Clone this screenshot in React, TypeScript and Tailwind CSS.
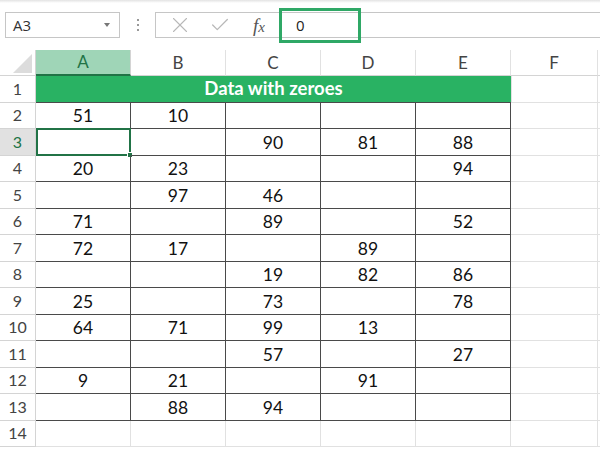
import { X, Check } from "lucide-react";

const cols = ["A", "B", "C", "D", "E", "F"];

// rows 2..13, columns A..E ("" = blank)
const data: string[][] = [
  ["51", "10", "", "", ""],
  ["", "", "90", "81", "88"],
  ["20", "23", "", "", "94"],
  ["", "97", "46", "", ""],
  ["71", "", "89", "", "52"],
  ["72", "17", "", "89", ""],
  ["", "", "19", "82", "86"],
  ["25", "", "73", "", "78"],
  ["64", "71", "99", "13", ""],
  ["", "", "57", "", "27"],
  ["9", "21", "", "91", ""],
  ["", "88", "94", "", ""],
];

function RowHeader({ n, active }: { n: number; active?: boolean }) {
  return (
    <div
      className={`h-[26.5px] flex items-center justify-center border-r border-b border-[#d4d4d4] text-[16px] ${
        active ? "bg-[#e1e1e1] text-[#217346]" : "bg-white text-[#444]"
      }`}
    >
      {n}
    </div>
  );
}

function FormulaBar() {
  return (
    <div className="h-[47px] flex items-start pt-[9px] pl-[5px]">
      {/* Name box */}
      <div className="w-[115px] h-[26px] border border-[#c6c6c6] flex items-center justify-between pl-[7px] pr-[9px] text-[15px] text-[#333] font-['Open_Sans',sans-serif]">
        <span>A3</span>
        <span className="w-0 h-0 border-l-[3.5px] border-r-[3.5px] border-t-[4px] border-l-transparent border-r-transparent border-t-[#777]" />
      </div>
      {/* Dots */}
      <div className="w-[35px] flex flex-col items-center gap-[3px] pt-[7px]">
        <span className="w-[2px] h-[2px] bg-[#999]" />
        <span className="w-[2px] h-[2px] bg-[#999]" />
        <span className="w-[2px] h-[2px] bg-[#999]" />
      </div>
      {/* Formula input */}
      <div className="relative flex-1 h-[26px] border border-[#c6c6c6] border-r-0 flex items-center">
        <div className="w-[45px] flex justify-center pl-[2px]">
          <X size={26} strokeWidth={1} color="#b8b8b8" />
        </div>
        <div className="w-[38px] flex justify-center">
          <Check size={22} strokeWidth={1.4} color="#b8b8b8" />
        </div>
        <div className="w-[40px] flex justify-center text-[19px] italic text-[#555] font-['Liberation_Serif',serif] leading-none">
          f<span className="text-[15px] self-end">x</span>
        </div>
        <div className="absolute left-[123px] top-[-5px] w-[82px] h-[35px] border-[3px] border-[#2fa866] flex items-center pl-[14px] text-[15px] text-[#222] font-['Open_Sans',sans-serif]">
          0
        </div>
      </div>
    </div>
  );
}

export default function App() {
  return (
    <div className="w-[600px] h-[449px] overflow-hidden bg-white font-['Lato',sans-serif]">
      <div className="h-[3px] bg-gradient-to-b from-[#e3e3e3] to-white" />
      <FormulaBar />

      <div className="grid grid-cols-[36px_repeat(5,95px)_87px_1fr]">
        {/* Column headers */}
        <div className="relative h-[26px] border-r border-b border-[#d4d4d4]">
          <div className="absolute right-[3px] bottom-[2px] w-0 h-0 [border-bottom:19px_solid_#dcdcdc] [border-left:19px_solid_transparent]" />
        </div>
        {cols.map((c) => (
          <div
            key={c}
            className={`h-[26px] flex items-center justify-center text-[17px] border-r ${
              c === "A"
                ? "bg-[#9fd5b7] text-[#217346] border-[#d4d4d4] border-b-2 border-b-[#217346]"
                : "text-[#444] border-[#e1e1e1] border-b border-b-[#d4d4d4]"
            }`}
          >
            {c}
          </div>
        ))}
        <div className="h-[26px] border-b border-[#d4d4d4]" />

        {/* Row 1: merged title */}
        <RowHeader n={1} />
        <div className="col-span-5 h-[26.5px] bg-[#29b263] border-b border-[#4a4a4a] flex items-center justify-center text-white font-bold text-[18.5px]">
          Data with zeroes
        </div>
        <div className="h-[26.5px] border-l border-r border-b border-[#e1e1e1]" />
        <div className="h-[26.5px] border-b border-[#e1e1e1]" />

        {/* Rows 2-13 */}
        {data.map((row, i) => {
          const n = i + 2;
          return [
            <RowHeader key={`h${n}`} n={n} active={n === 3} />,
            ...row.map((v, j) => (
              <div
                key={`${n}-${j}`}
                className="relative h-[26.5px] flex items-center justify-center pt-[2px] border-r border-b border-[#4a4a4a] text-[17.5px] text-[#111]"
              >
                {v}
                {n === 3 && j === 0 && (
                  <div className="absolute left-0 top-[-1px] right-[-1px] bottom-[-1px] border-2 border-[#217346]">
                    <div className="absolute right-[-4px] bottom-[-4px] w-[6px] h-[6px] bg-[#217346] border border-white" />
                  </div>
                )}
              </div>
            )),
            <div key={`f${n}`} className="h-[26.5px] border-r border-b border-[#e1e1e1]" />,
            <div key={`g${n}`} className="h-[26.5px] border-b border-[#e1e1e1]" />,
          ];
        })}

        {/* Row 14 */}
        <RowHeader n={14} />
        {cols.map((c) => (
          <div key={`14${c}`} className="h-[26.5px] border-r border-b border-[#e1e1e1]" />
        ))}
        <div className="h-[26.5px] border-b border-[#e1e1e1]" />
      </div>
    </div>
  );
}
